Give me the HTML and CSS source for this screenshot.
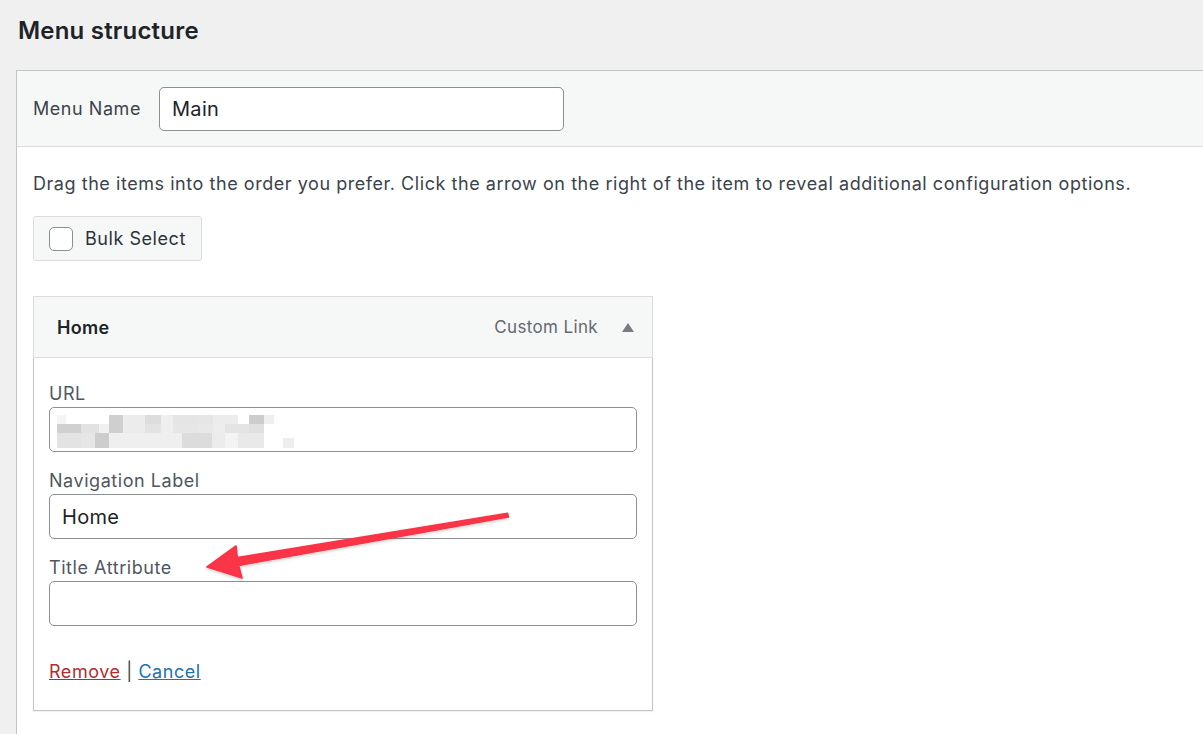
FILE: index.html
```html
<!DOCTYPE html>
<html lang="en">
<head>
<meta charset="utf-8">
<title>Menu structure</title>
<link rel="stylesheet" href="styles.css">
</head>
<body>
<div class="page">
  <h2 class="title">Menu structure</h2>
  <div class="panel">
    <div class="panel-head">
      <label class="name-label" for="menu-name">Menu Name</label>
      <input id="menu-name" class="name-input" type="text" value="Main">
    </div>
    <div class="panel-body">
      <p class="intro">Drag the items into the order you prefer. Click the arrow on the right of the item to reveal additional configuration options.</p>
      <label class="bulk"><span class="check"></span><span>Bulk Select</span></label>

      <div class="item">
        <div class="item-head">
          <span class="item-title">Home</span>
          <span class="item-type">Custom Link</span>
          <span class="item-toggle"></span>
        </div>
        <div class="item-body">
          <div class="field">
            <span class="field-label">URL</span>
            <div class="field-input redacted">
              <svg class="blur" width="250" height="40" viewBox="0 0 250 40" aria-hidden="true">
                <rect x="7" y="5" width="9" height="9" fill="#f5f5f5"/>
                <rect x="59" y="5" width="14" height="9" fill="#cfcfcf"/>
                <rect x="73" y="5" width="22" height="9" fill="#ececec"/>
                <rect x="95" y="5" width="16" height="9" fill="#dddddd"/>
                <rect x="111" y="5" width="12" height="9" fill="#efefef"/>
                <rect x="123" y="5" width="25" height="9" fill="#e5e5e5"/>
                <rect x="148" y="5" width="15" height="9" fill="#e6e6e6"/>
                <rect x="163" y="5" width="25" height="9" fill="#ececec"/>
                <rect x="199" y="5" width="15" height="9" fill="#cccccc"/>
                <rect x="214" y="5" width="10" height="9" fill="#efefef"/>

                <rect x="7" y="14" width="24" height="9" fill="#d0d0d0"/>
                <rect x="31" y="14" width="18" height="9" fill="#e2e2e2"/>
                <rect x="49" y="14" width="10" height="9" fill="#f0f0f0"/>
                <rect x="59" y="14" width="14" height="9" fill="#cfcfcf"/>
                <rect x="73" y="14" width="22" height="9" fill="#ececec"/>
                <rect x="95" y="14" width="16" height="9" fill="#e3e3e3"/>
                <rect x="111" y="14" width="12" height="9" fill="#efefef"/>
                <rect x="123" y="14" width="25" height="9" fill="#e6e6e6"/>
                <rect x="148" y="14" width="15" height="9" fill="#e8e8e8"/>
                <rect x="163" y="14" width="12" height="9" fill="#ededed"/>
                <rect x="175" y="14" width="24" height="9" fill="#e4e4e4"/>
                <rect x="199" y="14" width="15" height="9" fill="#e0e0e0"/>

                <rect x="7" y="23" width="24" height="15" fill="#e3e3e3"/>
                <rect x="31" y="23" width="14" height="15" fill="#e6e6e6"/>
                <rect x="45" y="23" width="14" height="15" fill="#cdcdcd"/>
                <rect x="59" y="23" width="73" height="15" fill="#efefef"/>
                <rect x="132" y="23" width="30" height="15" fill="#dcdcdc"/>
                <rect x="162" y="23" width="13" height="15" fill="#ececec"/>
                <rect x="175" y="23" width="13" height="15" fill="#f3f3f3"/>
                <rect x="188" y="23" width="26" height="15" fill="#e9e9e9"/>
                <rect x="233" y="28" width="11" height="10" fill="#eeeeee"/>
              </svg>
            </div>
          </div>
          <div class="field">
            <span class="field-label">Navigation Label</span>
            <input class="field-input" type="text" value="Home">
          </div>
          <div class="field">
            <span class="field-label">Title Attribute</span>
            <input class="field-input" type="text" value="">
          </div>
          <div class="actions">
            <a class="remove" href="#">Remove</a>
            <span class="sep">|</span>
            <a class="cancel" href="#">Cancel</a>
          </div>
        </div>
      </div>
    </div>
  </div>

  <svg class="arrow" width="1203" height="734" viewBox="0 0 1203 734" aria-hidden="true">
    <defs>
      <filter id="sh" x="-10%" y="-50%" width="120%" height="200%">
        <feDropShadow dx="0" dy="1.5" stdDeviation="1.5" flood-color="#000" flood-opacity="0.18"/>
      </filter>
    </defs>
    <path d="M507.6,513.3 L237.3,557.6 L236,546 L207,567 L242,578 L238.7,565.4 L508.4,516.9 Z"
          fill="#f93447" stroke="#f93447" stroke-width="1.6" stroke-linejoin="round" filter="url(#sh)"/>
  </svg>
</div>
</body>
</html>
```

FILE: styles.css
```css
* { box-sizing: border-box; }

html, body {
  margin: 0;
  padding: 0;
}

body {
  background: #f0f0f1;
  color: #1d2327;
  font-family: Inter, "Noto Sans", "Liberation Sans", sans-serif;
  font-size: 18px;
  letter-spacing: 0.55px;
  width: 1203px;
  height: 734px;
  overflow: hidden;
}

.page {
  position: relative;
  width: 1203px;
  height: 734px;
}

.title {
  margin: 0;
  padding: 16px 0 0 18px;
  height: 70px;
  font-size: 24px;
  font-weight: 600;
  letter-spacing: 0.2px;
  line-height: 30px;
  color: #1d2327;
}

.panel {
  margin-left: 16px;
  border: 1px solid #c3c4c7;
  border-right: none;
  background: #fff;
  height: 700px;
}

.panel-head {
  display: flex;
  align-items: center;
  gap: 18px;
  height: 76px;
  padding: 0 16px;
  background: #f6f7f7;
  border-bottom: 1px solid #dcdcde;
}

.name-label {
  color: #3c434a;
}

.name-input {
  width: 405px;
  height: 44px;
  border: 1px solid #8c8f94;
  border-radius: 5px;
  background: #fff;
  padding: 0 12px;
  font: inherit;
  font-size: 20px;
  letter-spacing: 0.3px;
  color: #1d2327;
}

.panel-body {
  padding: 25px 16px 0 16px;
}

.intro {
  margin: 0;
  line-height: 24px;
  color: #3c434a;
}

.bulk {
  margin-top: 20px;
  display: inline-flex;
  align-items: center;
  gap: 12px;
  width: 169px;
  height: 45px;
  padding: 0 15px;
  background: #f6f7f7;
  border: 1px solid #dcdcde;
  border-radius: 3px;
  color: #2c3338;
}

.check {
  width: 24px;
  height: 24px;
  border: 1px solid #8c8f94;
  border-radius: 5px;
  background: #fff;
}

.item {
  margin-top: 35px;
  width: 620px;
  border: 1px solid #dcdcde;
  box-shadow: 0 1px 1px rgba(0, 0, 0, 0.05);
}

.item-head {
  display: flex;
  align-items: center;
  height: 61px;
  padding: 0 18px 0 23px;
  background: #f6f7f7;
  border-bottom: 1px solid #dcdcde;
}

.item-title {
  flex: 1;
  font-weight: 600;
  font-size: 18px;
  letter-spacing: 0.3px;
  color: #1d2327;
}

.item-type {
  font-size: 17px;
  letter-spacing: 0.35px;
  color: #646970;
}

.item-toggle {
  margin-left: 24px;
  width: 0;
  height: 0;
  border-left: 6px solid transparent;
  border-right: 6px solid transparent;
  border-bottom: 9px solid #787c82;
}

.item-body {
  padding: 25px 15px 0 15px;
  height: 353px;
  border: 1px solid #c3c4c7;
  border-top: none;
  margin: 0 -1px -1px -1px;
}

.field {
  display: flex;
  flex-direction: column;
  margin-bottom: 18px;
}

.field-label {
  line-height: 22px;
  color: #50575e;
  margin-bottom: 2px;
}

.field-input {
  width: 588px;
  height: 45px;
  border: 1px solid #8c8f94;
  border-radius: 5px;
  background: #fff;
  padding: 0 12px;
  font: inherit;
  font-size: 20px;
  letter-spacing: 0.3px;
  color: #1d2327;
}

.redacted {
  padding: 0;
  display: flex;
  align-items: center;
}

.blur {
  display: block;
}

.actions {
  margin-top: 35px;
  color: #3c434a;
}

.remove {
  color: #b32d2e;
  text-decoration: underline;
}

.cancel {
  color: #2271b1;
  text-decoration: underline;
}

.sep {
  margin: 0;
}

.arrow {
  position: absolute;
  left: 0;
  top: 0;
  pointer-events: none;
}
```
